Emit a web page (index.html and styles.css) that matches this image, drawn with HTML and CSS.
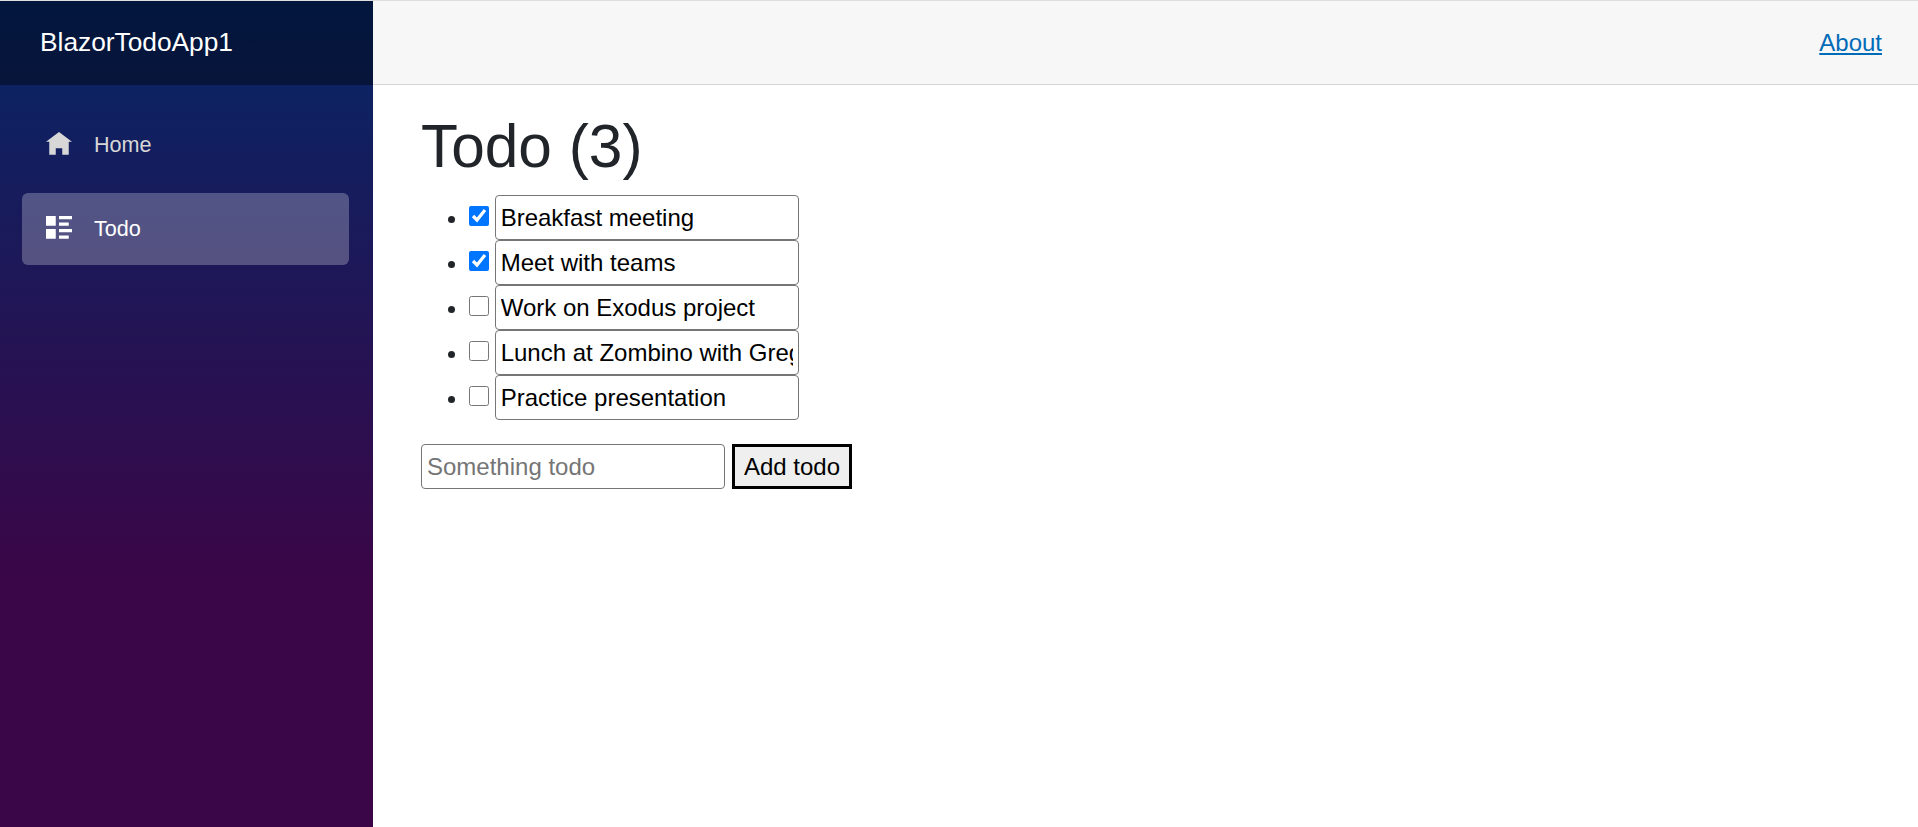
FILE: index.html
```html
<!DOCTYPE html>
<html lang="en">
<head>
    <meta charset="UTF-8">
    <meta name="viewport" content="width=device-width, initial-scale=1.0">
    <title>Todo (3)</title>
    <link rel="stylesheet" href="styles.css">
</head>
<body>
    <div class="page">
        <aside class="sidebar">
            <div class="brand-row">
                <a class="brand" href="#">BlazorTodoApp1</a>
            </div>
            <nav class="nav-list">
                <a class="nav-link" href="#">
                    <svg class="nav-icon" viewBox="0 0 8 8" aria-hidden="true">
                        <path d="M4 0l-4 3h1v4h2v-2h2v2h2v-4.03l1 .03-4-3z"/>
                    </svg>
                    Home
                </a>
                <a class="nav-link active" href="#">
                    <svg class="nav-icon" viewBox="0 0 8 8" aria-hidden="true">
                        <path d="M0 0v3h3v-3h-3zm4 0v1h4v-1h-4zm0 2v1h3v-1h-3zm-4 2v3h3v-3h-3zm4 0v1h4v-1h-4zm0 2v1h3v-1h-3z"/>
                    </svg>
                    Todo
                </a>
            </nav>
        </aside>

        <main class="main">
            <div class="top-row">
                <a class="about-link" href="#">About</a>
            </div>
            <article class="content">
                <h1>Todo (3)</h1>
                <ul class="todo-list">
                    <li><input type="checkbox" checked> <input class="text-input" type="text" value="Breakfast meeting"></li>
                    <li><input type="checkbox" checked> <input class="text-input" type="text" value="Meet with teams"></li>
                    <li><input type="checkbox"> <input class="text-input" type="text" value="Work on Exodus project"></li>
                    <li><input type="checkbox"> <input class="text-input" type="text" value="Lunch at Zombino with Greg"></li>
                    <li><input type="checkbox"> <input class="text-input" type="text" value="Practice presentation"></li>
                </ul>
                <div class="add-row">
                    <input class="text-input" type="text" placeholder="Something todo">
                    <button class="add-button" type="button">Add todo</button>
                </div>
            </article>
        </main>
    </div>
</body>
</html>
```

FILE: styles.css
```css
html, body {
    height: 100%;
}

body {
    font-family: 'Liberation Sans', Arial, sans-serif;
    font-size: 24px;
    line-height: 1.5;
    color: #212529;
    background: #fff;
    margin: 0;
    padding: 1px 0 0;
    box-sizing: border-box;
    box-shadow: inset 0 1px 0 #dedede;
}

.page {
    display: flex;
    height: 100%;
}

.sidebar {
    width: 373px;
    flex: none;
    background-image: linear-gradient(180deg, rgb(5, 39, 103) 0%, #3a0647 70%);
}

.brand-row {
    height: 84px;
    display: flex;
    align-items: center;
    padding-left: 40px;
    background-color: rgba(0, 0, 0, 0.4);
}

.brand {
    color: #fff;
    font-size: 26.3px;
    text-decoration: none;
}

.nav-list {
    padding: 24px 24px 0 22px;
    display: flex;
    flex-direction: column;
    gap: 12px;
}

.nav-link {
    display: flex;
    align-items: center;
    height: 72px;
    padding-left: 24px;
    border-radius: 6px;
    color: #d7d7d7;
    font-size: 21.6px;
    text-decoration: none;
}

.nav-link.active {
    background-color: rgba(255, 255, 255, 0.25);
    color: #fff;
}

.nav-icon {
    width: 26px;
    height: 26px;
    margin-right: 22px;
    fill: currentColor;
}

.main {
    flex: 1;
}

.top-row {
    height: 84px;
    box-sizing: border-box;
    display: flex;
    align-items: center;
    justify-content: flex-end;
    padding-right: 36px;
    background-color: #f7f7f7;
    border-bottom: 1px solid #d6d5d5;
}

.about-link {
    color: #006bb7;
}

.content {
    padding: 26px 48px 0;
}

h1 {
    font-size: 60.4px;
    font-weight: 400;
    line-height: 70px;
    margin: 0 0 14px;
}

.todo-list {
    margin: 0 0 24px;
    padding-left: 48px;
}

.todo-list li {
    height: 45px;
}

input[type="checkbox"] {
    width: 20px;
    height: 20px;
    margin: 0 -1px 0 0;
}

.text-input {
    width: 304px;
    height: 45px;
    box-sizing: border-box;
    padding: 0 5px;
    border: 1px solid #767676;
    border-radius: 4px;
    font-family: inherit;
    font-size: 24px;
    color: #000;
}

.text-input::placeholder {
    color: #757575;
}

.add-row {
    display: flex;
    gap: 7px;
}

.add-button {
    width: 120px;
    height: 45px;
    box-sizing: border-box;
    padding: 0;
    border: 3px solid #000;
    background: #efefef;
    font-family: inherit;
    font-size: 24px;
    color: #000;
}
```
